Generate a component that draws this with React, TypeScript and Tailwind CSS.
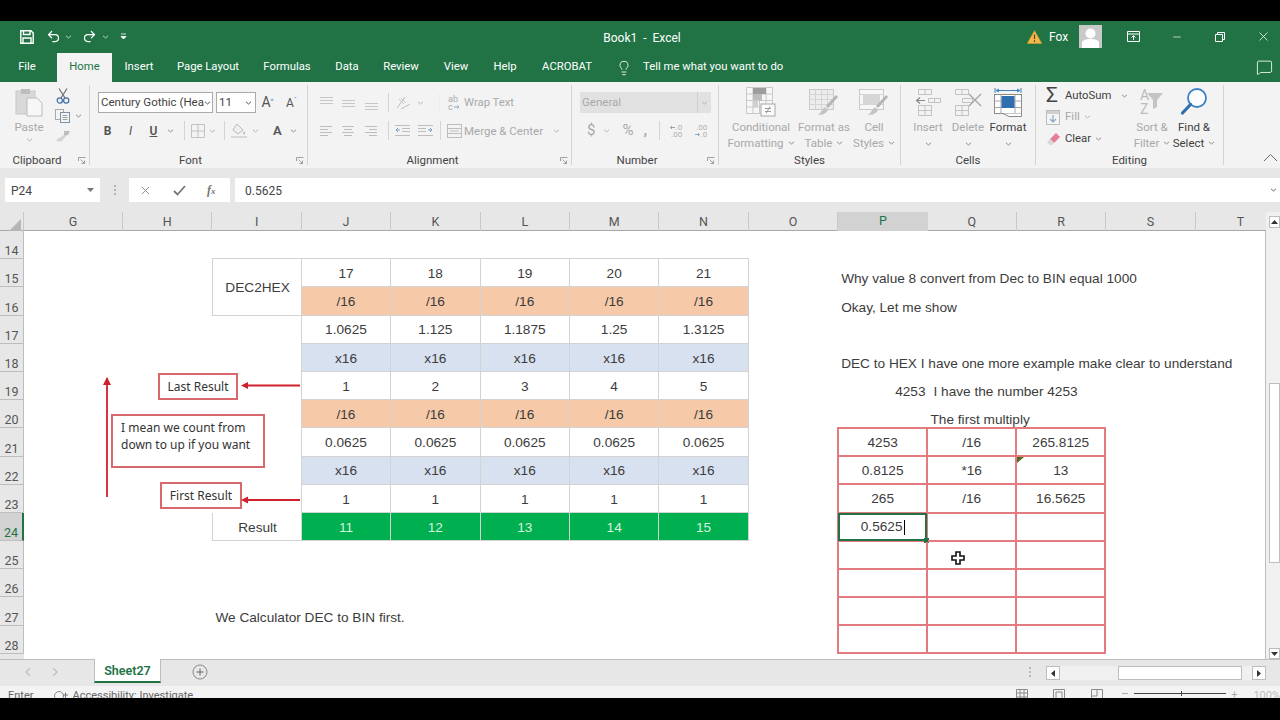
import { Lightbulb, MessageSquare, Minus, Redo2, Undo2, X } from "lucide-react";

const columns = ["G", "H", "I", "J", "K", "L", "M", "N", "O", "P", "Q", "R", "S"];
const rowNumbers = [14, 15, 16, 17, 18, 19, 20, 21, 22, 23, 24, 25, 26, 27, 28];

const hexRows = [
  { bg: "bg-white", text: "text-[#3c3c3c]", vals: ["17", "18", "19", "20", "21"] },
  { bg: "bg-[#f6caa9]", text: "text-[#3c3c3c]", vals: ["/16", "/16", "/16", "/16", "/16"] },
  { bg: "bg-white", text: "text-[#3c3c3c]", vals: ["1.0625", "1.125", "1.1875", "1.25", "1.3125"] },
  { bg: "bg-[#d7e1f0]", text: "text-[#3c3c3c]", vals: ["x16", "x16", "x16", "x16", "x16"] },
  { bg: "bg-white", text: "text-[#3c3c3c]", vals: ["1", "2", "3", "4", "5"] },
  { bg: "bg-[#f6caa9]", text: "text-[#3c3c3c]", vals: ["/16", "/16", "/16", "/16", "/16"] },
  { bg: "bg-white", text: "text-[#3c3c3c]", vals: ["0.0625", "0.0625", "0.0625", "0.0625", "0.0625"] },
  { bg: "bg-[#d7e1f0]", text: "text-[#3c3c3c]", vals: ["x16", "x16", "x16", "x16", "x16"] },
  { bg: "bg-white", text: "text-[#3c3c3c]", vals: ["1", "1", "1", "1", "1"] },
  { bg: "bg-[#00b050]", text: "text-[#d5f2df]", vals: ["11", "12", "13", "14", "15"] },
];

const redRows = [
  ["4253", "/16", "265.8125"],
  ["0.8125", "*16", "13"],
  ["265", "/16", "16.5625"],
  ["0.5625", "", ""],
  ["", "", ""],
  ["", "", ""],
  ["", "", ""],
  ["", "", ""],
];

function Chev({ className = "" }: { className?: string }) {
  return (
    <svg width="7" height="4" viewBox="0 0 7 4" className={className}>
      <path d="M1 .8 3.5 3 6 .8" fill="none" stroke="currentColor" strokeWidth="1" />
    </svg>
  );
}

function Launcher() {
  return (
    <svg width="8" height="8" viewBox="0 0 8 8" className="text-[#8a8a8a]">
      <path d="M.5 4V.5H7.5M2.5 2.5 6.5 6.5M6.5 3.5V6.5H3.5" fill="none" stroke="currentColor" strokeWidth="0.8" />
    </svg>
  );
}

function Lines({ align }: { align: "l" | "c" | "r" }) {
  const d =
    align === "l"
      ? "M0 .5H12M0 3.5H8M0 6.5H12M0 9.5H8"
      : align === "c"
        ? "M0 .5H12M2 3.5H10M0 6.5H12M2 9.5H10"
        : "M0 .5H12M4 3.5H12M0 6.5H12M4 9.5H12";
  return (
    <svg width="12" height="10" viewBox="0 0 12 10">
      <path d={d} stroke="#bdbdbd" fill="none" />
    </svg>
  );
}

function TopLines({ offset }: { offset: number }) {
  return (
    <svg width="13" height="14" viewBox="0 0 13 14">
      <path d={`M0 ${offset}.5H13M0 ${offset + 3}.5H13M0 ${offset + 6}.5H13`} stroke="#c6c6c6" fill="none" />
    </svg>
  );
}

function GroupLabel({ title, launcher, className = "" }: { title: string; launcher?: boolean; className?: string }) {
  return (
    <div className={`relative h-[16px] pt-[3px] text-center leading-[16px] text-[#444] ${className}`}>
      {title}
      {launcher && (
        <span className="absolute right-[3px] top-[8px] flex">
          <Launcher />
        </span>
      )}
    </div>
  );
}

function Big({
  icon,
  l1,
  l2,
  w,
  dim = true,
  chevOnly = false,
}: {
  icon: React.ReactNode;
  l1: string;
  l2?: string;
  w: string;
  dim?: boolean;
  chevOnly?: boolean;
}) {
  return (
    <div className={`flex shrink-0 flex-col items-center ${w} ${dim ? "text-[#a9a9a9]" : "text-[#3f3f3f]"}`}>
      <div className="flex h-[34px] shrink-0 items-center justify-center">{icon}</div>
      <div className="h-[16px] shrink-0 whitespace-nowrap leading-[16px]">{l1}</div>
      <div className="flex h-[16px] shrink-0 items-center gap-[4px] whitespace-nowrap leading-[16px]">
        {l2}
        <Chev className={chevOnly ? "mt-[2px] text-[#8c8c8c]" : "text-[#8c8c8c]"} />
      </div>
    </div>
  );
}

function PasteIcon() {
  return (
    <svg width="28" height="30" viewBox="0 0 28 30">
      <rect x="1" y="4" width="19" height="23" fill="#d8d8d8" stroke="#c8c8c8" />
      <rect x="6" y="2" width="9" height="5" fill="#bdbdbd" />
      <path d="M12 11H22L27 16V29H12Z" fill="#f7f7f7" stroke="#bcbcbc" />
    </svg>
  );
}

function ScissorsIcon() {
  return (
    <svg width="14" height="16" viewBox="0 0 14 16">
      <path d="M3 .5 9 10M11 .5 5 10" stroke="#6f6f6f" strokeWidth="1.2" fill="none" />
      <circle cx="3.8" cy="12.5" r="2.6" fill="none" stroke="#3f6fa8" strokeWidth="1.2" />
      <circle cx="10.2" cy="12.5" r="2.6" fill="none" stroke="#3f6fa8" strokeWidth="1.2" />
    </svg>
  );
}

function CopyIcon() {
  return (
    <svg width="15" height="14" viewBox="0 0 15 14">
      <rect x=".5" y=".5" width="8" height="10" fill="#f4f4f4" stroke="#a8a8a8" />
      <rect x="5.5" y="3.5" width="9" height="10" fill="#f4f4f4" stroke="#7f93a8" />
      <path d="M7.5 6.5h5M7.5 8.5h5M7.5 10.5h5" stroke="#a0a0a0" />
    </svg>
  );
}

function PainterIcon() {
  return (
    <svg width="16" height="13" viewBox="0 0 16 13">
      <path d="M9 1 15 1 13 5 9 6Z" fill="#bdbdbd" />
      <path d="M9 5 1 10 3 12 5 11 6 12 11 6Z" fill="#d3d3d3" />
    </svg>
  );
}

function GridIcon() {
  return (
    <svg width="14" height="14" viewBox="0 0 14 14">
      <path d="M.5.5H13.5V13.5H.5ZM7 .5V13.5M.5 7H13.5" fill="none" stroke="#c2c2c2" />
    </svg>
  );
}

function FillIcon() {
  return (
    <svg width="16" height="15" viewBox="0 0 16 15">
      <path d="M6 1 12 7 7 11 2 7Z" fill="#efefef" stroke="#b9b9b9" />
      <path d="M13 8c1 1.500 1.500 2 1 3s-2 .500-2-.500Z" fill="#bdbdbd" />
      <rect x="0" y="13" width="16" height="2" fill="#d8d8d8" />
    </svg>
  );
}

function OrientIcon() {
  return (
    <svg width="16" height="14" viewBox="0 0 16 14">
      <path d="M1 12 9 1M5 13 14 8" stroke="#bdbdbd" fill="none" />
      <path d="M3 3 8 8M5 2 10 7" stroke="#c8c8c8" fill="none" />
    </svg>
  );
}

function IndentIcon({ flip }: { flip?: boolean }) {
  return (
    <svg width="15" height="12" viewBox="0 0 15 12" className={flip ? "-scale-x-100" : ""}>
      <path d="M0 .5H15M7 3.5H15M7 6.5H15M0 10.5H15" stroke="#bdbdbd" fill="none" />
      <path d="M5 5H1M3 3 1 5 3 7" stroke="#7f9cbc" fill="none" />
    </svg>
  );
}

function WrapIcon() {
  return (
    <span className="flex h-[16px] w-[13px] flex-col text-[9px] leading-[8px] text-[#a9a9a9]">
      <span>ab</span>
      <span className="flex items-center">
        c
        <svg width="6" height="4" viewBox="0 0 6 4" className="ml-px">
          <path d="M0 2H5M3.500 .5 5 2 3.500 3.500" stroke="#8da6c0" fill="none" />
        </svg>
      </span>
    </span>
  );
}

function MergeIcon() {
  return (
    <svg width="15" height="14" viewBox="0 0 15 14">
      <rect x=".5" y=".5" width="14" height="13" fill="none" stroke="#bdbdbd" />
      <path d="M.5 4.500H14.500M.5 9.500H14.500M3 7H12" stroke="#bdbdbd" fill="none" />
    </svg>
  );
}

function DecIcon({ more }: { more?: boolean }) {
  return (
    <span className="flex w-[17px] flex-col text-[8px] leading-[7px] text-[#b0b0b0]">
      <span className="flex items-center justify-end">
        {!more && (
          <svg width="5" height="5" viewBox="0 0 5 5" className="mr-px">
            <path d="M5 2.500H.5M2 1 .5 2.500 2 4" stroke="#8da6c0" fill="none" />
          </svg>
        )}
        {more ? ".00" : ".0"}
      </span>
      <span className="flex items-center justify-end">
        {more && (
          <svg width="5" height="5" viewBox="0 0 5 5" className="mr-px">
            <path d="M0 2.500H4.500M3 1 4.500 2.500 3 4" stroke="#8da6c0" fill="none" />
          </svg>
        )}
        {more ? ".0" : ".00"}
      </span>
    </span>
  );
}

function CondIcon() {
  return (
    <svg width="30" height="30" viewBox="0 0 30 30">
      <path d="M.5.5H26.500V26.500H.5ZM.5 7H26.500M.5 13.500H26.500M.5 20H26.500M7 .5V26.500M13.500.5V26.500M20 .5V26.500" fill="#f7f7f7" stroke="#c9c9c9" />
      <rect x="7" y="1" width="13" height="6" fill="#9d9d9d" />
      <rect x="7" y="7" width="9" height="6.500" fill="#bdbdbd" />
      <rect x="7" y="13.500" width="5" height="6.500" fill="#d0d0d0" />
      <rect x="15" y="17" width="14" height="12" fill="#fbfbfb" stroke="#a8a8a8" />
      <path d="M19 21.500H25M19 24.500H25M24 19.500 20 26.500" stroke="#9a9a9a" fill="none" />
    </svg>
  );
}

function BrushGrid() {
  return (
    <svg width="30" height="30" viewBox="0 0 30 30">
      <rect x=".5" y="2.500" width="24" height="20" fill="#ededed" stroke="#c9c9c9" />
      <path d="M.5 7.500H24.500M.5 12.500H24.500M.5 17.500H24.500M6.500 2.500V22.500M12.500 2.500V22.500M18.500 2.500V22.500" stroke="#d4d4d4" fill="none" />
      <path d="M27 8 29 10 19 21 17 19Z" fill="#b4b4b4" />
      <path d="M16 20 19 23C17 27 13 28 9 28 12 26 13 22 16 20Z" fill="#c4c4c4" />
    </svg>
  );
}

function CellStyleIcon() {
  return (
    <svg width="30" height="30" viewBox="0 0 30 30">
      <rect x=".5" y="2.500" width="24" height="20" fill="#f7f7f7" stroke="#c9c9c9" />
      <rect x="4" y="7" width="17" height="11" fill="#d6d6d6" />
      <path d="M.5 7.500H4M21 7.500H24.500M.5 17.500H4M21 17.500H24.500" stroke="#d4d4d4" fill="none" />
      <path d="M27 8 29 10 19 21 17 19Z" fill="#b4b4b4" />
      <path d="M16 20 19 23C17 27 13 28 9 28 12 26 13 22 16 20Z" fill="#c4c4c4" />
    </svg>
  );
}

function InsertIcon() {
  return (
    <svg width="26" height="28" viewBox="0 0 26 28">
      <path d="M3.500 1.500H16.500V6.500H3.500ZM10 1.500V6.500M3.500 17.500H16.500V27.500H3.500ZM3.500 22.500H16.500M10 17.500V27.500M13.500 10.500H25.500V14.500H13.500ZM19.500 10.500V14.500" fill="none" stroke="#c2c2c2" />
      <path d="M1 12.500H10M5 9.500 1.500 12.500 5 15.500" fill="none" stroke="#8a8a8a" strokeWidth="1.200" />
    </svg>
  );
}

function DeleteIcon() {
  return (
    <svg width="28" height="28" viewBox="0 0 28 28">
      <path d="M1.500 1.500H14.500V6.500H1.500ZM8 1.500V6.500M1.500 17.500H14.500V27.500H1.500ZM1.500 22.500H14.500M8 17.500V27.500M8.500 10.500H18.500V14.500H8.500Z" fill="none" stroke="#c2c2c2" />
      <path d="M15 6 27 18M27 6 15 18" stroke="#a4a4a4" strokeWidth="1.300" />
    </svg>
  );
}

function FormatIcon() {
  return (
    <svg width="28" height="30" viewBox="0 0 28 30">
      <path d="M1 1V6M27 1V6M2 3.500H26M5 2 2 3.500 5 5M23 2 26 3.500 23 5" fill="none" stroke="#3f7fba" strokeWidth="1" />
      <rect x=".5" y="7.500" width="27" height="19" fill="#fff" stroke="#8a8a8a" />
      <path d="M.5 14H27.500M.5 20.500H27.500M7 7.500V26.500M21 7.500V26.500" stroke="#a8a8a8" fill="none" />
      <rect x="7.500" y="9" width="13" height="12" fill="#2f6fb0" />
      <path d="M9 26.500 15 29.500H27.500V26.500" fill="#fff" stroke="#8a8a8a" />
    </svg>
  );
}

function FillDownIcon() {
  return (
    <svg width="14" height="15" viewBox="0 0 14 15">
      <rect x=".5" y=".5" width="13" height="14" fill="#f4f4f4" stroke="#bdbdbd" />
      <rect x="1" y="1" width="12" height="3" fill="#cfcfcf" />
      <path d="M7 5V12M4 9 7 12 10 9" stroke="#8da6c0" fill="none" strokeWidth="1.200" />
    </svg>
  );
}

function EraserIcon() {
  return (
    <svg width="13" height="12" viewBox="0 0 13 12">
      <path d="M9 0 13 4 7 10 3 6Z" fill="#e77e96" />
      <path d="M3 6 7 10 5 12 3 12 0 9Z" fill="#d9d9d9" />
    </svg>
  );
}

function SortIcon() {
  return (
    <span className="flex items-center">
      <span className="flex flex-col text-[14px] leading-[14px] text-[#bdbdbd]">
        <span>A</span>
        <span>Z</span>
      </span>
      <svg width="17" height="18" viewBox="0 0 17 18" className="-ml-[2px] -mt-[3px]">
        <path d="M0 1H16L10 8V15L6 17V8Z" fill="#c4c4c4" />
      </svg>
    </span>
  );
}

function FindIcon() {
  return (
    <svg width="28" height="30" viewBox="0 0 28 30">
      <circle cx="17" cy="11" r="9" fill="#fdfdfd" stroke="#3d80c4" strokeWidth="1.800" />
      <path d="M10.500 17.500 2.500 26" stroke="#2d6fb0" strokeWidth="3.200" strokeLinecap="round" />
    </svg>
  );
}

function Ribbon() {
  return (
    <div className="flex h-[86px] bg-[#f3f3f3] pt-[3px] text-[11.500px]">
      <div className="flex h-[80px] w-[90px] flex-col border-r border-[#d4d4d4]">
        <div className="flex h-[64px]">
          <div className="ml-[13px] flex w-[32px] flex-col items-center text-[#a9a9a9]">
            <div className="mt-[2px] h-[32px]">
              <PasteIcon />
            </div>
            <div className="leading-[16px]">Paste</div>
            <Chev className="mt-[3px] text-[#b5b5b5]" />
          </div>
          <div className="ml-[5px] flex flex-col pt-[1px]">
            <div className="flex h-[19px] items-center pl-[6px]">
              <ScissorsIcon />
            </div>
            <div className="flex h-[21px] items-center gap-[5px] pl-[5px]">
              <CopyIcon />
              <Chev className="text-[#8c8c8c]" />
            </div>
            <div className="flex h-[21px] items-center pl-[5px]">
              <PainterIcon />
            </div>
          </div>
        </div>
        <GroupLabel title="Clipboard" launcher className="pr-[15px]" />
      </div>

      <div className="flex h-[80px] w-[218px] flex-col border-r border-[#d4d4d4]">
        <div className="h-[64px] pl-[8px] pt-[7px]">
          <div className="flex h-[21px] items-center text-[#3f3f3f]">
            <div className="flex h-[21px] w-[115px] items-center justify-between overflow-hidden border border-[#ababab] bg-white pl-[2px] pr-[3px] text-[11.500px]">
              <span className="whitespace-nowrap pt-[1px]">Century Gothic (Hea</span>
              <Chev className="shrink-0 text-[#555]" />
            </div>
            <div className="ml-[3px] flex h-[21px] w-[40px] items-center justify-between border border-[#ababab] bg-white pl-[2px] pr-[3px] text-[11.500px]">
              <span className="pt-[1px]">11</span>
              <Chev className="text-[#555]" />
            </div>
            <span className="w-[23px] text-center text-[14px] text-[#555]">
              A<sup className="text-[7px] text-[#3f7fba]">^</sup>
            </span>
            <span className="ml-px w-[23px] text-center text-[12px] text-[#555]">
              A<sup className="text-[7px] text-[#3f7fba]">ˇ</sup>
            </span>
          </div>
          <div className="-ml-[2px] mt-[7px] flex h-[21px] items-center text-[#555]">
            <span className="w-[23px] text-center text-[12px] font-bold">B</span>
            <span className="w-[23px] text-center text-[12px] italic">I</span>
            <span className="w-[23px] text-center text-[12px] font-semibold underline">U</span>
            <Chev className="mx-[2px] text-[#8c8c8c]" />
            <span className="ml-[8px] h-[19px] w-px bg-[#d4d4d4]" />
            <span className="ml-[6px] flex">
              <GridIcon />
            </span>
            <Chev className="ml-[4px] text-[#b5b5b5]" />
            <span className="ml-[8px] h-[19px] w-px bg-[#d4d4d4]" />
            <span className="ml-[6px] flex">
              <FillIcon />
            </span>
            <Chev className="ml-[5px] text-[#b5b5b5]" />
            <span className="ml-[14px] text-[13px] font-semibold">A</span>
            <Chev className="ml-[8px] text-[#8c8c8c]" />
          </div>
        </div>
        <GroupLabel title="Font" launcher className="pr-[16px]" />
      </div>

      <div className="flex h-[80px] w-[264px] flex-col border-r border-[#d4d4d4] text-[#a9a9a9]">
        <div className="h-[64px] pl-[12px] pt-[7px]">
          <div className="flex h-[21px] items-center">
            <span className="flex w-[22px]">
              <TopLines offset={1} />
            </span>
            <span className="flex w-[23px]">
              <TopLines offset={4} />
            </span>
            <span className="flex w-[23px]">
              <TopLines offset={7} />
            </span>
            <span className="h-[19px] w-px bg-[#d4d4d4]" />
            <span className="ml-[7px] flex">
              <OrientIcon />
            </span>
            <Chev className="ml-[5px] text-[#b5b5b5]" />
            <span className="ml-[15px] h-[19px] w-px bg-[#ededed]" />
            <span className="ml-[8px] flex">
              <WrapIcon />
            </span>
            <span className="ml-[3px] pt-[2px] text-[11.300px]">Wrap Text</span>
          </div>
          <div className="mt-[7px] flex h-[21px] items-center">
            <span className="flex w-[22px]">
              <Lines align="l" />
            </span>
            <span className="flex w-[23px]">
              <Lines align="c" />
            </span>
            <span className="flex w-[23px]">
              <Lines align="r" />
            </span>
            <span className="h-[19px] w-px bg-[#d4d4d4]" />
            <span className="ml-[6px] flex">
              <IndentIcon />
            </span>
            <span className="ml-[8px] flex">
              <IndentIcon flip />
            </span>
            <span className="ml-[7px] h-[19px] w-px bg-[#d4d4d4]" />
            <span className="ml-[6px] flex">
              <MergeIcon />
            </span>
            <span className="ml-[2px] whitespace-nowrap pt-[2px] text-[11.500px]">Merge &amp; Center</span>
            <Chev className="ml-[10px] text-[#b5b5b5]" />
          </div>
        </div>
        <GroupLabel title="Alignment" launcher className="pr-[14px]" />
      </div>

      <div className="flex h-[80px] w-[147px] flex-col border-r border-[#d4d4d4] text-[#a9a9a9]">
        <div className="h-[64px] pl-[8px] pt-[7px]">
          <div className="flex h-[21px] w-[131px] items-center justify-between bg-[#e1e1e1] pl-[2px] text-[11.500px]">
            <span className="pt-[1px]">General</span>
            <span className="flex h-[21px] w-[14px] items-center justify-center border-l border-[#cfcfcf]">
              <Chev className="text-[#b5b5b5]" />
            </span>
          </div>
          <div className="mt-[7px] flex h-[21px] items-center">
            <span className="ml-[7px] text-[15px]">$</span>
            <Chev className="ml-[8px] text-[#b5b5b5]" />
            <span className="ml-[12px] text-[15px]">%</span>
            <span className="ml-[10px] text-[15px] font-bold">,</span>
            <span className="ml-[12px] h-[19px] w-px bg-[#d4d4d4]" />
            <span className="ml-[5px] flex">
              <DecIcon />
            </span>
            <span className="ml-[8px] flex">
              <DecIcon more />
            </span>
          </div>
        </div>
        <GroupLabel title="Number" launcher className="pr-[16px]" />
      </div>

      <div className="flex h-[80px] w-[182px] flex-col border-r border-[#d4d4d4]">
        <div className="flex h-[64px] pl-[8px]">
          <Big w="w-[68px]" icon={<CondIcon />} l1="Conditional" l2="Formatting" />
          <Big w="w-[58px]" icon={<BrushGrid />} l1="Format as" l2="Table" />
          <Big w="w-[42px]" icon={<CellStyleIcon />} l1="Cell" l2="Styles" />
        </div>
        <GroupLabel title="Styles" />
      </div>

      <div className="flex h-[80px] w-[135px] flex-col border-r border-[#d4d4d4]">
        <div className="flex h-[64px] pl-[7px]">
          <Big w="w-[40px]" icon={<InsertIcon />} l1="Insert" chevOnly />
          <Big w="w-[40px]" icon={<DeleteIcon />} l1="Delete" chevOnly />
          <Big w="w-[40px]" dim={false} icon={<FormatIcon />} l1="Format" chevOnly />
        </div>
        <GroupLabel title="Cells" />
      </div>

      <div className="flex h-[80px] w-[188px] flex-col border-r border-[#d4d4d4]">
        <div className="flex h-[64px] pl-[10px]">
          <div className="flex w-[86px] shrink-0 flex-col text-[#3f3f3f]">
            <div className="flex h-[21px] items-center">
              <span className="w-[19px] text-[21px] leading-[21px] text-[#444]">Σ</span>
              <span className="pt-[2px] text-[11.300px]">AutoSum</span>
              <Chev className="ml-[10px] text-[#8c8c8c]" />
            </div>
            <div className="flex h-[22px] items-center text-[#a9a9a9]">
              <span className="flex w-[19px]">
                <FillDownIcon />
              </span>
              <span>Fill</span>
              <Chev className="ml-[4px] text-[#b5b5b5]" />
            </div>
            <div className="flex h-[21px] items-center">
              <span className="flex w-[19px] pl-[1px]">
                <EraserIcon />
              </span>
              <span className="pt-[2px] text-[11.300px]">Clear</span>
              <Chev className="ml-[4px] text-[#8c8c8c]" />
            </div>
          </div>
          <Big w="w-[40px]" icon={<SortIcon />} l1="Sort &" l2="Filter" />
          <Big w="w-[44px]" dim={false} icon={<FindIcon />} l1="Find &" l2="Select" />
        </div>
        <GroupLabel title="Editing" />
      </div>

      <div className="flex flex-1 items-end justify-end pb-[6px] pr-[2px]">
        <svg width="15" height="9" viewBox="0 0 15 9">
          <path d="M1 8 7.500 1.500 14 8" fill="none" stroke="#6a6a6a" />
        </svg>
      </div>
    </div>
  );
}

function TitleBar() {
  return (
    <div className="flex h-[31px] items-center bg-[#217346] text-white">
      <svg width="14" height="14" viewBox="0 0 14 14" className="ml-[20px]">
        <path d="M.8.800H11L13.200 3V13.200H.8ZM3.500.800V4.500H10V.800M3 13.200V8H11V13.200" fill="none" stroke="currentColor" strokeWidth="1.400" />
      </svg>
      <Undo2 size={15} strokeWidth={2} className="ml-[12px]" />
      <Chev className="ml-[4px] text-[#bcd6c8]" />
      <Redo2 size={15} strokeWidth={2} className="ml-[10px]" />
      <Chev className="ml-[5px] text-[#bcd6c8]" />
      <svg width="7" height="7" viewBox="0 0 7 7" className="ml-[11px]">
        <path d="M1 1H6M1 3.500 3.500 6 6 3.500Z" stroke="currentColor" fill="currentColor" strokeWidth="0.800" />
      </svg>
      <div className="ml-[415px] w-[200px] whitespace-pre pt-[3px] text-center text-[12px]">Book1  -  Excel</div>
      <svg width="15" height="14" viewBox="0 0 15 14" className="ml-[285px]">
        <path d="M7.500 .5 14.800 13.500H.2Z" fill="#f2b84b" stroke="#d99a2b" strokeWidth="0.500" />
        <path d="M7.500 4.500V9M7.500 10.300V12" stroke="#5b4210" strokeWidth="1.200" />
      </svg>
      <span className="ml-[7px] text-[12px]">Fox</span>
      <div className="ml-[11px] flex h-[23px] w-[23px] items-end justify-center overflow-hidden bg-[#c9c9c9]">
        <svg width="19" height="21" viewBox="0 0 19 21">
          <circle cx="9.500" cy="6.500" r="5" fill="#fff" />
          <path d="M1 21V16C1 13 5 12 9.500 12S18 13 18 16V21Z" fill="#fff" />
        </svg>
      </div>
      <svg width="13" height="11" viewBox="0 0 13 11" className="ml-[25px]">
        <path d="M.5.500H12.500V10.500H.5ZM.5 3H12.500M6.500 9V5M4.500 6.500 6.500 4.500 8.500 6.500" fill="none" stroke="currentColor" />
      </svg>
      <Minus size={12} strokeWidth={1.300} className="ml-[31px]" />
      <svg width="10" height="10" viewBox="0 0 10 10" className="ml-[32px]">
        <path d="M.5 2.500H7.500V9.500H.5ZM2.500 2.500V.5H9.500V7.500H7.500" fill="none" stroke="currentColor" />
      </svg>
      <X size={15} strokeWidth={1.200} className="ml-[31px]" />
    </div>
  );
}

function TabStrip() {
  const tabs = [
    { name: "Insert", w: "w-[54px]" },
    { name: "Page Layout", w: "w-[84px]" },
    { name: "Formulas", w: "w-[74px]" },
    { name: "Data", w: "w-[46px]" },
    { name: "Review", w: "w-[62px]" },
    { name: "View", w: "w-[48px]" },
    { name: "Help", w: "w-[50px]" },
    { name: "ACROBAT", w: "w-[74px]" },
  ];
  return (
    <div className="flex h-[30px] items-end bg-[#217346] text-[11.300px] text-white">
      <div className="flex h-[29px] w-[54px] items-center justify-center">File</div>
      <div className="ml-[3px] flex h-[29px] w-[55px] items-center justify-center bg-[#f3f3f3] text-[#217346]">Home</div>
      {tabs.map((t) => (
        <div key={t.name} className={`flex h-[29px] items-center justify-center ${t.w}`}>
          {t.name}
        </div>
      ))}
      <div className="flex h-[29px] items-center pl-[12px]">
        <Lightbulb size={16} strokeWidth={1.300} />
        <span className="ml-[11px]">Tell me what you want to do</span>
      </div>
      <div className="ml-auto flex h-[29px] items-center pr-[7px]">
        <MessageSquare size={17} strokeWidth={1.200} />
      </div>
    </div>
  );
}

function FormulaBar() {
  return (
    <div className="flex h-[44px] items-center bg-[#e7e7e7] text-[12px] text-[#444]">
      <div className="ml-[5px] flex h-[24px] w-[95px] items-center justify-between bg-white pl-[6px] pr-[6px]">
        <span className="pt-[1px]">P24</span>
        <svg width="7" height="4" viewBox="0 0 7 4">
          <path d="M0 0H7L3.500 4Z" fill="#777" />
        </svg>
      </div>
      <div className="ml-[14px] flex flex-col gap-[2px]">
        <span className="h-[2px] w-[2px] bg-[#b5b5b5]" />
        <span className="h-[2px] w-[2px] bg-[#b5b5b5]" />
        <span className="h-[2px] w-[2px] bg-[#b5b5b5]" />
      </div>
      <div className="ml-[13px] flex h-[24px] w-[101px] items-center bg-white text-[#777]">
        <X size={13} strokeWidth={1.500} className="ml-[10px]" />
        <svg width="13" height="11" viewBox="0 0 13 11" className="ml-[21px]">
          <path d="M1 6 4.500 9.500 12 1" fill="none" stroke="currentColor" strokeWidth="1.800" />
        </svg>
        <span className="ml-[21px] font-['Liberation_Serif',serif] text-[12px] font-bold italic">
          f<span className="text-[9px]">x</span>
        </span>
      </div>
      <div className="ml-[5px] flex h-[24px] flex-1 items-center justify-between bg-white pl-[10px] pr-[3px]">
        <span className="pt-[1px]">0.5625</span>
        <Chev className="text-[#666]" />
      </div>
    </div>
  );
}

function SheetGrid() {
  const textCls = "flex items-end whitespace-nowrap leading-[16px] text-[#3c3c3c] pb-[1px]";
  const calloutCls = "absolute flex h-[27px] items-center justify-center border-2 border-[#d8686c] bg-white pt-[1px] font-['Noto_Sans',sans-serif] text-[12px] text-[#333]";
  return (
    <div className="relative grid h-[428px] flex-1 grid-cols-[99px_repeat(12,89.4px)_1fr] grid-rows-[repeat(15,28.2px)] overflow-hidden border-r border-[#bdbdbd] bg-white font-['Liberation_Sans',Arial,sans-serif] text-[13.650px]">
      <div className="col-start-3 row-start-2 row-span-2 -mt-px flex items-center justify-center border border-r-0 border-[#d3d3d3] pt-[2px] text-[#3c3c3c]">
        DEC2HEX
      </div>
      <div className="col-start-4 col-span-5 row-start-2 row-span-10 -ml-px -mt-px grid grid-cols-5 grid-rows-10 border-l border-t border-[#d3d3d3]">
        {hexRows.map((row, r) =>
          row.vals.map((v, c) => (
            <div key={`${r}-${c}`} className={`flex items-center justify-center border-b border-r border-[#d3d3d3] pt-[3px] ${row.bg} ${row.text}`}>
              {v}
            </div>
          )),
        )}
      </div>
      <div className="col-start-3 row-start-11 flex items-center justify-center border border-r-0 border-t-0 border-[#d3d3d3] pt-[3px] text-[#3c3c3c]">
        Result
      </div>
      <div className="col-start-3 row-start-14 whitespace-nowrap pl-[3px] pt-[13px] leading-[16px] text-[#3c3c3c]">We Calculator DEC to BIN first.</div>

      <div className={`col-start-10 row-start-2 -mb-[1px] pl-[3px] ${textCls}`}>Why value 8 convert from Dec to BIN equal 1000</div>
      <div className={`col-start-10 row-start-3 -mb-[1px] pl-[3px] ${textCls}`}>Okay, Let me show</div>
      <div className={`col-start-10 row-start-5 -mb-[1px] pl-[3px] ${textCls}`}>DEC to HEX I have one more example make clear to understand</div>
      <div className={`col-start-10 row-start-6 -mb-[1px] justify-end pr-[2px] ${textCls}`}>4253</div>
      <div className={`col-start-11 row-start-6 -mb-[1px] pl-[6px] ${textCls}`}>I have the number 4253</div>
      <div className={`col-start-11 row-start-7 -mb-[1px] pl-[3px] ${textCls}`}>The first multiply</div>

      <div className="col-start-10 col-span-3 row-start-8 row-span-8 -ml-px -mt-px grid grid-cols-3 grid-rows-8 border-l-2 border-t-2 border-[#e27a80]">
        {redRows.map((row, r) =>
          row.map((v, c) => {
            const selected = r === 3 && c === 0;
            const noted = r === 1 && c === 2;
            return (
              <div key={`${r}-${c}`} className="relative flex items-center justify-center border-b-2 border-r-2 border-[#e27a80] pt-[2px] text-[#3c3c3c]">
                {selected ? (
                  <>
                    <span>{v}</span>
                    <span className="ml-px h-[15px] w-px bg-black" />
                    <span className="absolute -inset-[1px] border-2 border-[#217346]" />
                    <span className="absolute -bottom-[3px] -right-[3px] h-[5px] w-[5px] bg-[#217346]" />
                  </>
                ) : (
                  v
                )}
                {noted && <span className="absolute left-0 top-0 h-0 w-0 border-r-[7px] border-t-[6px] border-r-transparent border-t-[#4f6a1c]" />}
              </div>
            );
          }),
        )}
      </div>

      <div className={`left-[134px] top-[142px] w-[80px] ${calloutCls}`}>Last Result</div>
      <div className={`left-[136px] top-[251px] w-[82px] ${calloutCls}`}>First Result</div>
      <div className="absolute left-[87px] top-[183px] h-[54px] w-[154px] border-2 border-[#d8686c] bg-white pl-[8px] pt-[3px] font-['Noto_Sans',sans-serif] text-[12px] leading-[17px] text-[#333]">
        I mean we count from
        <br />
        down to up if you want
      </div>
      <svg width="200" height="130" viewBox="0 0 200 130" className="absolute left-[78px] top-[146px] text-[#d0202c]">
        <path d="M5 1V120" stroke="currentColor" strokeWidth="1.800" fill="none" />
        <path d="M5 0 9 8H1Z" fill="currentColor" />
        <path d="M198 8.500H144" stroke="currentColor" strokeWidth="1.800" fill="none" />
        <path d="M139 8.500 146 5V12Z" fill="currentColor" />
        <path d="M198 123H144" stroke="currentColor" strokeWidth="1.800" fill="none" />
        <path d="M139 123 146 119.500V126.500Z" fill="currentColor" />
      </svg>
      <svg width="14" height="14" viewBox="0 0 14 14" className="absolute left-[927px] top-[320px]">
        <path d="M5 1H9V5H13V9H9V13H5V9H1V5H5Z" fill="#fff" stroke="#111" strokeWidth="1.600" />
      </svg>
    </div>
  );
}

function RowHeaders() {
  return (
    <div className="h-[428px] w-[24px] overflow-hidden bg-[#e7e7e7] text-[12.500px] text-[#555]">
      {rowNumbers.map((n) => (
        <div
          key={n}
          className={
            n === 24
              ? "flex h-[28.2px] items-end justify-center border-b border-r-2 border-[#bdbdbd] border-r-[#217346] bg-[#d2d2d2] leading-[14px] text-[#217346]"
              : "flex h-[28.2px] items-end justify-center border-b border-r border-[#bdbdbd] leading-[14px]"
          }
        >
          {n}
        </div>
      ))}
    </div>
  );
}

function ColumnHeaders() {
  return (
    <div className="grid h-[19px] grid-cols-[24px_99px_repeat(12,89.4px)_1fr] border-b border-[#a8a8a8] bg-[#e7e7e7] text-[12.500px] text-[#555]">
      <div className="flex items-end justify-end border-r border-[#c8c8c8] pb-[2px] pr-[2px]">
        <svg width="12" height="12" viewBox="0 0 12 12">
          <path d="M12 0V12H0Z" fill="#b5b5b5" />
        </svg>
      </div>
      {columns.map((c) => (
        <div
          key={c}
          className={
            c === "P"
              ? "flex items-center justify-center border-b-2 border-[#217346] bg-[#d2d2d2] text-[#217346]"
              : "flex items-center justify-center border-r border-[#c8c8c8]"
          }
        >
          {c}
        </div>
      ))}
      <div className="flex items-center pl-[41px]">T</div>
    </div>
  );
}

function VScroll() {
  return (
    <div className="flex h-[447px] flex-1 flex-col bg-[#f0f0f0] pl-[3px] pt-[4px]">
      <div className="flex h-[12px] items-center justify-center border border-[#bdbdbd] bg-white">
        <svg width="7" height="4" viewBox="0 0 7 4">
          <path d="M0 4H7L3.500 0Z" fill="#333" />
        </svg>
      </div>
      <div className="mt-[155px] h-[180px] border border-[#bdbdbd] bg-white" />
      <div className="mt-[85px] flex h-[11px] items-center justify-center border border-[#bdbdbd] bg-white">
        <svg width="7" height="4" viewBox="0 0 7 4">
          <path d="M0 0H7L3.500 4Z" fill="#333" />
        </svg>
      </div>
    </div>
  );
}

function SheetTabs() {
  return (
    <div className="flex h-[27px] items-start border-t border-[#bdbdbd] bg-[#e7e7e7] text-[#777]">
      <svg width="6" height="8" viewBox="0 0 6 8" className="ml-[25px] mt-[8px]">
        <path d="M5 0 1 4 5 8" fill="none" stroke="#bdbdbd" strokeWidth="1.200" />
      </svg>
      <svg width="6" height="8" viewBox="0 0 6 8" className="ml-[21px] mt-[8px]">
        <path d="M1 0 5 4 1 8" fill="none" stroke="#bdbdbd" strokeWidth="1.200" />
      </svg>
      <div className="-mt-px ml-[36px] flex h-[24px] w-[67px] items-center justify-center border-x border-b-2 border-x-[#bdbdbd] border-b-[#217346] bg-white pt-[2px] text-[12.500px] font-semibold text-[#217346]">
        Sheet27
      </div>
      <svg width="16" height="16" viewBox="0 0 16 16" className="ml-[31px] mt-[4px]">
        <circle cx="8" cy="8" r="7" fill="none" stroke="#8a8a8a" />
        <path d="M8 4.500V11.500M4.500 8H11.500" stroke="#6a6a6a" />
      </svg>
      <div className="ml-[821px] mt-[7px] flex flex-col gap-[2px]">
        <span className="h-[2px] w-[2px] bg-[#b5b5b5]" />
        <span className="h-[2px] w-[2px] bg-[#b5b5b5]" />
        <span className="h-[2px] w-[2px] bg-[#b5b5b5]" />
      </div>
      <div className="ml-[15px] mt-[6px] flex h-[14px] w-[220px] items-stretch bg-[#f0f0f0]">
        <div className="flex w-[14px] items-center justify-center border border-[#bdbdbd] bg-white">
          <svg width="4" height="7" viewBox="0 0 4 7">
            <path d="M4 0V7L0 3.500Z" fill="#333" />
          </svg>
        </div>
        <div className="ml-[58px] w-[124px] border border-[#bdbdbd] bg-white" />
        <div className="ml-auto flex w-[14px] items-center justify-center border border-[#bdbdbd] bg-white">
          <svg width="4" height="7" viewBox="0 0 4 7">
            <path d="M0 0V7L4 3.500Z" fill="#333" />
          </svg>
        </div>
      </div>
    </div>
  );
}

function StatusBar() {
  return (
    <div className="flex h-[12px] overflow-hidden bg-[#f3f3f3] pt-[3px] text-[11px] leading-[14px] text-[#666]">
      <div className="flex w-[1016px] shrink-0">
        <span className="ml-[8px]">Enter</span>
        <svg width="14" height="13" viewBox="0 0 14 13" className="ml-[20px] shrink-0">
          <circle cx="5" cy="7" r="4.500" fill="none" stroke="#888" />
          <path d="M9 6H14M11.500 3.500V9" stroke="#777" />
        </svg>
        <span className="ml-[5px] whitespace-nowrap">Accessibility: Investigate</span>
      </div>
      <svg width="12" height="12" viewBox="0 0 12 12" className="shrink-0">
        <path d="M.5.500H11.500V11.500H.5ZM4 .5V11.500M8 .5V11.500M.5 4H11.500M.5 8H11.500" fill="none" stroke="#8a8a8a" />
      </svg>
      <svg width="12" height="12" viewBox="0 0 12 12" className="ml-[25px] shrink-0">
        <path d="M.5.500H11.500V11.500H.5ZM3 3H9V11H3Z" fill="none" stroke="#8a8a8a" />
      </svg>
      <svg width="12" height="12" viewBox="0 0 12 12" className="ml-[26px] shrink-0">
        <path d="M.5.500H11.500V11.500H.5ZM6 .5V7H.5" fill="none" stroke="#8a8a8a" />
      </svg>
      <span className="ml-[19px] h-px w-[6px] translate-y-[4px] bg-[#aaa]" />
      <span className="relative ml-[6px] h-[1px] w-[94px] translate-y-[4px] bg-[#444]">
        <span className="absolute -top-[2px] left-[47px] h-[5px] w-px bg-[#444]" />
      </span>
      <span className="ml-[5px] -translate-y-[1px] text-[#aaa]">+</span>
      <span className="ml-[16px] text-[#bbb]">100%</span>
    </div>
  );
}

export default function App() {
  return (
    <div className="flex h-[720px] w-[1280px] flex-col overflow-hidden bg-black font-['Roboto',sans-serif]">
      <div className="h-[21px]" />
      <TitleBar />
      <TabStrip />
      <Ribbon />
      <FormulaBar />
      <div className="flex h-[447px]">
        <div className="flex w-[1266px] flex-col">
          <ColumnHeaders />
          <div className="flex">
            <RowHeaders />
            <SheetGrid />
          </div>
        </div>
        <VScroll />
      </div>
      <SheetTabs />
      <StatusBar />
    </div>
  );
}
